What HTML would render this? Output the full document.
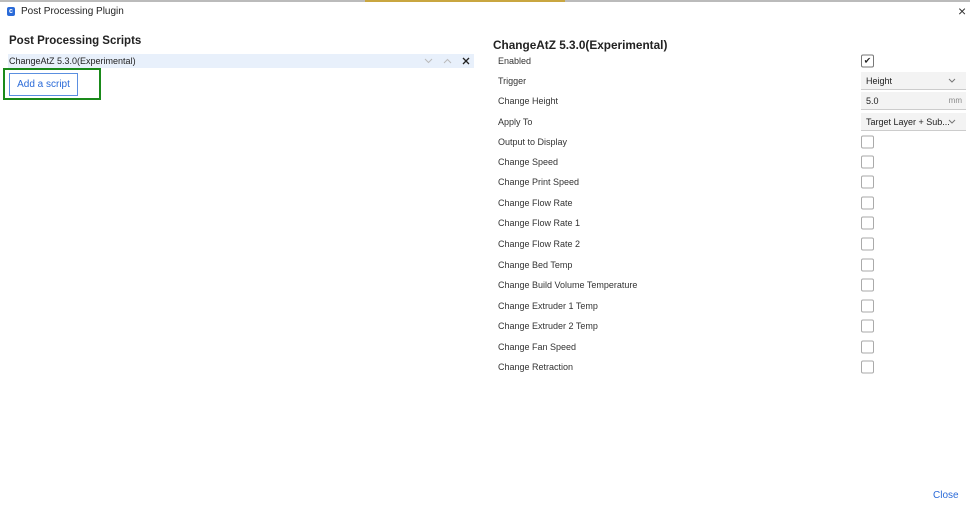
<!DOCTYPE html><html><head><style>
body{margin:0;width:970px;height:516px;background:#fff;font-family:"Liberation Sans",sans-serif;position:relative;overflow:hidden;color:#222}
.a{position:absolute}
.lab{position:absolute;left:498px;font-size:9px;color:#333;transform:translateY(-50%)}
.cb{position:absolute;left:861px;width:11px;height:11px;border:1px solid #aaa;border-radius:2px;background:#fff;transform:translateY(-50%)}
.dd{position:absolute;left:861px;width:105px;height:18px;background:#f3f3f3;border-bottom:1px solid #ccc;font-size:9px;line-height:18px;transform:translateY(-50%);box-sizing:border-box;padding-left:5px}
.chev{position:absolute;right:10px;top:6px}
</style></head><body>
<div class="a" style="left:0;top:0;width:970px;height:2px;background:#bbb"></div>
<div class="a" style="left:365px;top:0;width:200px;height:2px;background:#c9a640"></div>
<div class="a" style="left:7px;top:7px;width:8px;height:9px;background:#2a6ad8;border-radius:2px;color:#fff;font-size:7px;line-height:9px;text-align:center;font-weight:bold">c</div>
<div class="a" style="left:21px;top:6px;font-size:10px">Post Processing Plugin</div>
<div class="a" style="left:958px;top:3px;font-size:14px;color:#333">×</div>
<div class="a" style="left:9px;top:35px;font-size:11.5px;font-weight:bold;color:#222">Post Processing Scripts</div>
<div class="a" style="left:8px;top:54px;width:466px;height:14px;background:#e8f0fb"></div>
<div class="a" style="left:9px;top:56px;font-size:9px">ChangeAtZ 5.3.0(Experimental)</div>
<svg class="a" style="left:424px;top:57px" width="30" height="8"><path d="M1 2l3.5 3.5L8 2" stroke="#bbb" fill="none"/><path d="M20 6l3.5-3.5L27 6" stroke="#bbb" fill="none"/></svg>
<svg class="a" style="left:462px;top:57px" width="8" height="8"><path d="M1 1l6 6M7 1l-6 6" stroke="#222" stroke-width="1.3"/></svg>
<div class="a" style="left:3px;top:68px;width:94px;height:28px;border:2px solid #1a8a1a"></div>
<div class="a" style="left:9px;top:73px;width:69px;height:23px;border:1px solid #5b8fe0;box-sizing:border-box;color:#2a6ad8;font-size:10px;line-height:22px;text-align:center">Add a script</div>
<div class="a" style="left:493px;top:38px;font-size:11.8px;font-weight:bold">ChangeAtZ 5.3.0(Experimental)</div>
<div class="lab" style="top:61px">Enabled</div><div class="cb" style="top:61px;font-size:9px;line-height:11px;text-align:center;border-color:#777">✔</div>
<div class="lab" style="top:81px">Trigger</div><div class="dd" style="top:81px">Height<svg class="chev" width="8" height="6"><path d="M1 1l3 3 3-3" stroke="#777" fill="none"/></svg></div>
<div class="lab" style="top:101px">Change Height</div><div class="dd" style="top:101px">5.0<span style="position:absolute;right:4px;color:#888;font-size:8px">mm</span></div>
<div class="lab" style="top:122px">Apply To</div><div class="dd" style="top:122px">Target Layer + Sub...<svg class="chev" width="8" height="6"><path d="M1 1l3 3 3-3" stroke="#777" fill="none"/></svg></div>
<div class="lab" style="top:142px">Output to Display</div><div class="cb" style="top:142px"></div>
<div class="lab" style="top:162px">Change Speed</div><div class="cb" style="top:162px"></div>
<div class="lab" style="top:182px">Change Print Speed</div><div class="cb" style="top:182px"></div>
<div class="lab" style="top:203px">Change Flow Rate</div><div class="cb" style="top:203px"></div>
<div class="lab" style="top:223px">Change Flow Rate 1</div><div class="cb" style="top:223px"></div>
<div class="lab" style="top:244px">Change Flow Rate 2</div><div class="cb" style="top:244px"></div>
<div class="lab" style="top:265px">Change Bed Temp</div><div class="cb" style="top:265px"></div>
<div class="lab" style="top:285px">Change Build Volume Temperature</div><div class="cb" style="top:285px"></div>
<div class="lab" style="top:306px">Change Extruder 1 Temp</div><div class="cb" style="top:306px"></div>
<div class="lab" style="top:326px">Change Extruder 2 Temp</div><div class="cb" style="top:326px"></div>
<div class="lab" style="top:347px">Change Fan Speed</div><div class="cb" style="top:347px"></div>
<div class="lab" style="top:367px">Change Retraction</div><div class="cb" style="top:367px"></div>
<div class="a" style="left:933px;top:490px;font-size:10px;color:#2a6ad8">Close</div>
</body></html>
